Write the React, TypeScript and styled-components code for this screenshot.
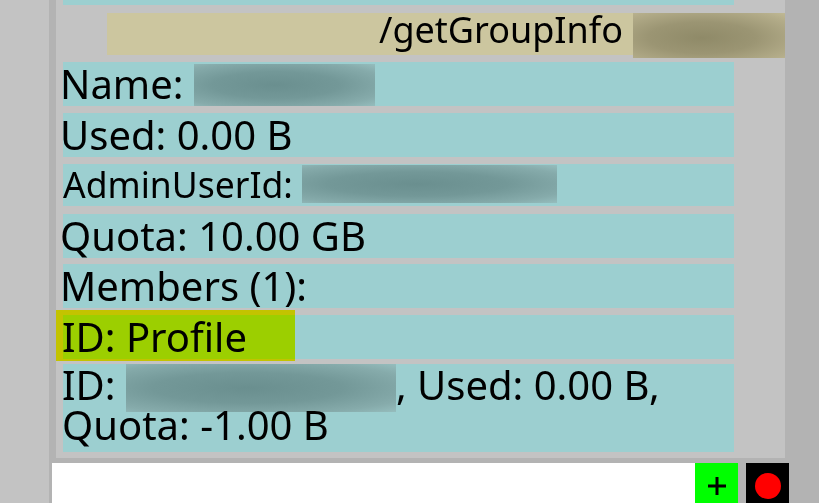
import styled, { createGlobalStyle } from "styled-components";

const GlobalStyle = createGlobalStyle`
  html, body {
    margin: 0;
    padding: 0;
    height: 503px;
    overflow: hidden;
    background: #c3c3c3;
    font-family: "Noto Sans", "Open Sans", sans-serif;
    color: #000;
  }
`;

const Screen = styled.div`
  display: flex;
  width: 819px;
  height: 503px;
  overflow: hidden;
`;

const Sidebar = styled.div`
  width: 49px;
  flex-shrink: 0;
  background: #c3c3c3;
`;

const Main = styled.div`
  flex: 1;
  display: flex;
  flex-direction: column;
  background: #b3b3b3;
  min-width: 0;
`;

const Log = styled.div`
  flex: 1;
  min-height: 0;
  display: flex;
  flex-direction: column;
  justify-content: flex-end;
  overflow: hidden;
  margin: 0 34px 5px 7px;
  padding: 0 51px 6px 7px;
  background: #c3c3c3;
`;

const Row = styled.div<{ $small?: boolean; $gap?: number; $pad?: string }>`
  position: relative;
  flex-shrink: 0;
  min-height: 40px;
  margin-top: ${p => p.$gap ?? 7}px;
  padding: ${p => p.$pad ?? (p.$small ? "0 0 2px" : "2px 0")};
  background: #9ccfd0;
  font-size: ${p => (p.$small ? 35.5 : 40)}px;
  line-height: 40px;
`;

const RowText = styled.div<{ $shift?: number }>`
  margin-left: ${p => p.$shift ?? -3}px;
`;

const Header = styled.div`
  flex-shrink: 0;
  display: flex;
  justify-content: flex-end;
  align-items: flex-start;
  height: 42px;
  margin: 8px -52px 0 44px;
  background: #ccc69f;
  font-size: 36px;
  line-height: 34px;
`;

const HeaderText = styled.span`
  padding-right: 10px;
`;

const Redacted = styled.span<{ $w: number; $h: number; $mt?: number; $mb?: number; $tan?: boolean }>`
  display: inline-block;
  vertical-align: top;
  width: ${p => p.$w}px;
  height: ${p => p.$h}px;
  margin-top: ${p => p.$mt ?? 0}px;
  margin-bottom: ${p => p.$mb ?? 0}px;
  background: ${p =>
    p.$tan
      ? "radial-gradient(ellipse at 45% 55%, #8f8a68 0%, #9b9573 45%, #b4ad8a 85%, #c0b995 100%)"
      : "radial-gradient(ellipse at 45% 50%, #6a8f8f 0%, #739898 45%, #86abab 80%, #95bdbd 100%)"};
`;

const Highlight = styled.div`
  position: absolute;
  left: -7px;
  top: -5px;
  width: 239px;
  height: 51px;
  background: #ffff00;
  mix-blend-mode: multiply;
  pointer-events: none;
`;

const InputBar = styled.div`
  flex-shrink: 0;
  display: flex;
  align-items: flex-start;
  height: 40px;
  padding: 0 30px 0 3px;
  gap: 8px;
`;

const Input = styled.div`
  flex: 1;
  height: 46px;
  margin-right: -8px;
  background: #ffffff;
`;

const IconButton = styled.button<{ $bg: string }>`
  display: flex;
  align-items: center;
  justify-content: center;
  width: 43px;
  height: 46px;
  padding: 0;
  border: none;
  background: ${p => p.$bg};
`;

const Dot = styled.span`
  width: 26px;
  height: 26px;
  border-radius: 50%;
  background: #ff0000;
`;

export default function App() {
  return (
    <>
      <GlobalStyle />
      <Screen>
        <Sidebar />
        <Main>
          <Log>
            {/* previous message, scrolled out of view */}
            <Row />
            <Header>
              <HeaderText>/getGroupInfo</HeaderText>
              <Redacted $w={153} $h={45} $tan />
            </Header>
            <Row>
              <RowText>
                Name: <Redacted $w={181} $h={42} $mb={-2} />
              </RowText>
            </Row>
            <Row>
              <RowText>Used: 0.00 B</RowText>
            </Row>
            <Row $small>
              <RowText $shift={0}>
                AdminUserId: <Redacted $w={255} $h={38} $mt={1} />
              </RowText>
            </Row>
            <Row $gap={8}>
              <RowText>Quota: 10.00 GB</RowText>
            </Row>
            <Row $gap={6}>
              <RowText>Members (1):</RowText>
            </Row>
            <Row>
              <RowText $shift={-1}>ID: Profile</RowText>
              <Highlight />
            </Row>
            <Row $gap={5} $pad="1px 0 7px">
              <RowText $shift={-1}>
                ID: <Redacted $w={270} $h={48} $mt={-1} $mb={-7} />, Used: 0.00 B, Quota: -1.00 B
              </RowText>
            </Row>
          </Log>
          <InputBar>
            <Input />
            <IconButton $bg="#00ff00" aria-label="add">
              <svg width="20" height="20" viewBox="0 0 20 20">
                <path d="M10 1v18M1 10h18" stroke="#000" strokeWidth="3" />
              </svg>
            </IconButton>
            <IconButton $bg="#000000" aria-label="record">
              <Dot />
            </IconButton>
          </InputBar>
        </Main>
      </Screen>
    </>
  );
}
